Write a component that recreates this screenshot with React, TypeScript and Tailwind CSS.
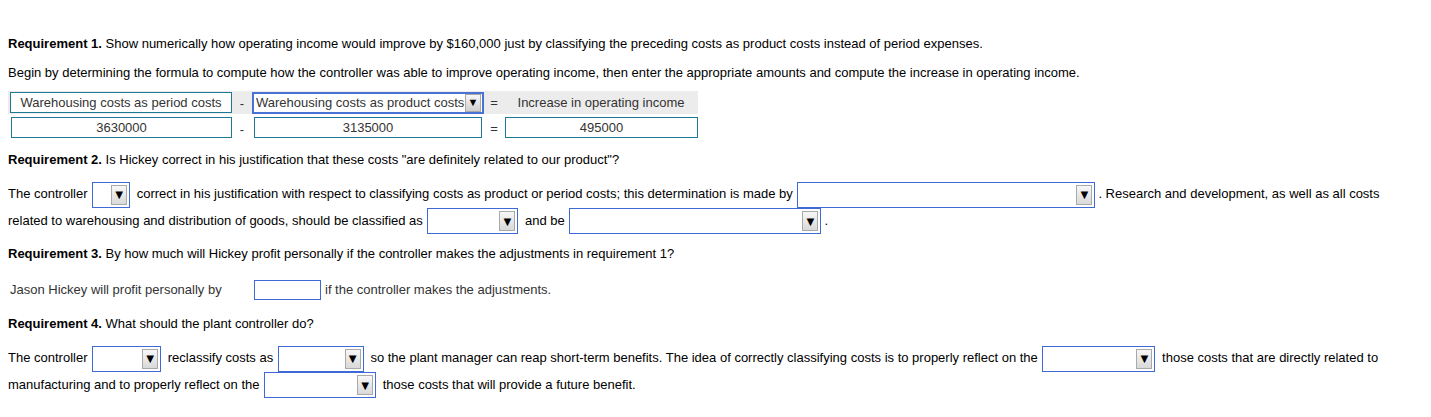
import type { ReactNode } from "react";

function Dropdown({ width }: { width: number }) {
  return (
    <span
      className="ml-[1px] mr-[3px] inline-flex h-[26px] items-center justify-end border border-[#3d6ad6] bg-white pr-[2px] align-middle"
      style={{ width }}
    >
      <span className="flex h-[20px] w-[16px] items-center justify-center border border-[#a9a9a9] bg-gradient-to-b from-[#f7f7f7] to-[#d9d9d9] text-[13px] leading-none text-black">
        ▼
      </span>
    </span>
  );
}

function Box({ children, className = "" }: { children: ReactNode; className?: string }) {
  return (
    <div className={`flex h-[21px] items-center justify-center border border-[#1f7896] bg-white text-[#333] ${className}`}>
      {children}
    </div>
  );
}

export default function App() {
  return (
    <main className="min-h-screen w-full bg-white px-[8px] pt-[36px] text-[13px] leading-[16px] text-black [font-family:'Liberation_Sans',Arial,sans-serif]">
      <p>
        <b>Requirement 1.</b> Show numerically how operating income would improve by $160,000 just by classifying the
        preceding costs as product costs instead of period expenses.
      </p>
      <p className="mt-[13px]">
        Begin by determining the formula to compute how the controller was able to improve operating income, then enter
        the appropriate amounts and compute the increase in operating income.
      </p>

      <div className="mt-[10px] w-[690px] text-[#333]">
        <div className="flex h-[23px] items-center bg-[#ececec]">
          <div className="w-[224px] pl-[2px]">
            <Box>Warehousing costs as period costs</Box>
          </div>
          <div className="w-[20px] pt-[3px] text-center">-</div>
          <div className="w-[232px]">
            <div className="flex h-[22px] items-center justify-between border-2 border-[#4a72d4] bg-white pl-[2px] pr-[1px] text-[#333]">
              <span>Warehousing costs as product costs</span>
              <span className="flex h-[18px] w-[16px] items-center justify-center border border-[#a9a9a9] bg-gradient-to-b from-[#f7f7f7] to-[#d0d0d0] text-[11px] leading-none text-black">
                ▼
              </span>
            </div>
          </div>
          <div className="w-[20px] text-center">=</div>
          <div className="flex w-[194px] justify-center">Increase in operating income</div>
        </div>
        <div className="mt-[3px] flex items-center">
          <div className="w-[224px] pl-[3px]">
            <Box>3630000</Box>
          </div>
          <div className="w-[20px] pt-[4px] text-center">-</div>
          <div className="w-[232px] px-[2px]">
            <Box>3135000</Box>
          </div>
          <div className="w-[20px] pt-[2px] text-center">=</div>
          <div className="w-[194px] pl-[1px]">
            <Box>495000</Box>
          </div>
        </div>
      </div>

      <p className="mt-[14px]">
        <b>Requirement 2.</b> Is Hickey correct in his justification that these costs "are definitely related to our
        product"?
      </p>
      <p className="mt-[13px] max-w-[1400px] leading-[26px]">
        The controller <Dropdown width={38} /> correct in his justification with respect to classifying costs as product
        or period costs; this determination is made by <Dropdown width={298} />. Research and development, as well as all
        costs related to warehousing and distribution of goods, should be classified as <Dropdown width={91} /> and be{" "}
        <Dropdown width={252} />.
      </p>

      <p className="mt-[12px]">
        <b>Requirement 3.</b> By how much will Hickey profit personally if the controller makes the adjustments in
        requirement 1?
      </p>
      <div className="mt-[18px] flex h-[20px] items-center text-[#333]">
        <span className="w-[246px] pl-[2px]">Jason Hickey will profit personally by</span>
        <span className="h-[20px] w-[67px] border border-[#3d6ad6] bg-white" />
        <span className="pl-[4px]">if the controller makes the adjustments.</span>
      </div>

      <p className="mt-[16px]">
        <b>Requirement 4.</b> What should the plant controller do?
      </p>
      <p className="mt-[13px] max-w-[1400px] leading-[26px]">
        The controller <Dropdown width={69} /> reclassify costs as <Dropdown width={86} /> so the plant manager can reap
        short-term benefits. The idea of correctly classifying costs is to properly reflect on the{" "}
        <Dropdown width={113} /> those costs that are directly related to manufacturing and to properly reflect on the{" "}
        <Dropdown width={112} /> those costs that will provide a future benefit.
      </p>
    </main>
  );
}
